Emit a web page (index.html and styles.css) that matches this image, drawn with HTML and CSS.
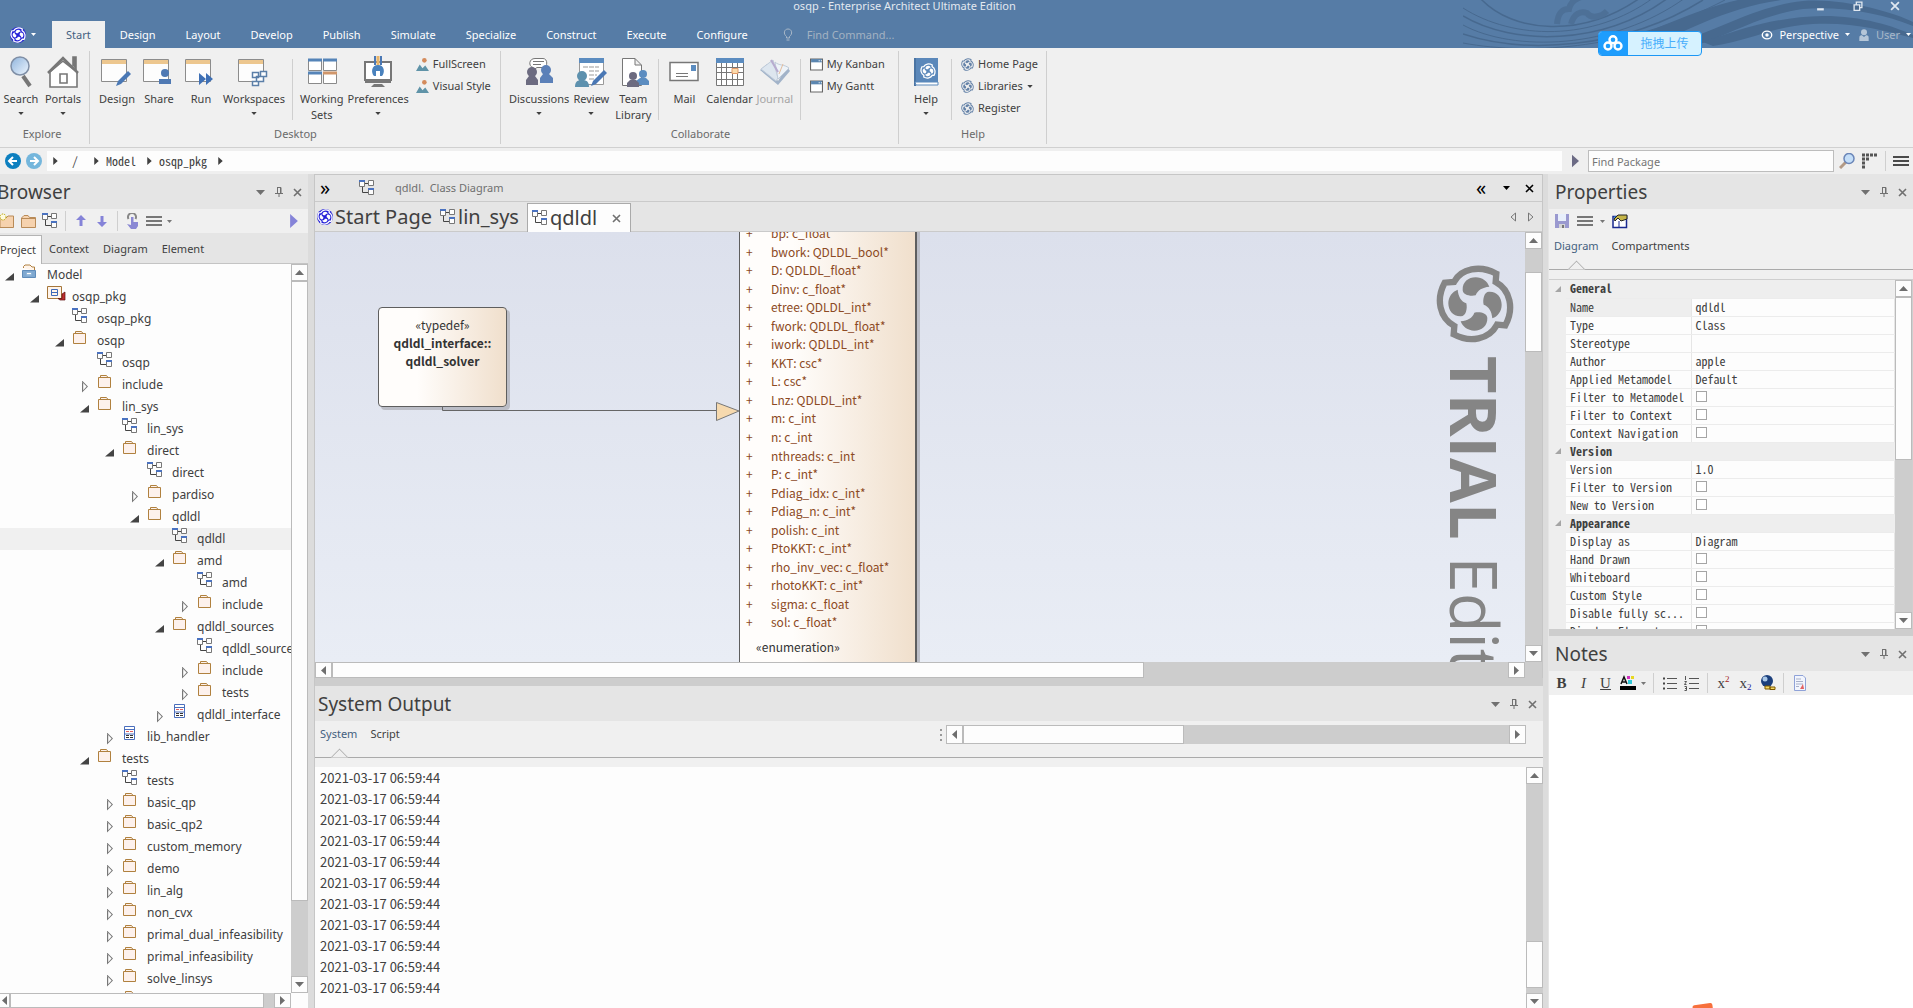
FILE: index.html
```html
<!DOCTYPE html>
<html lang="en">
<head>
    <meta charset="UTF-8">
    <meta name="viewport" content="width=device-width, initial-scale=1.0">
    <title>osqp - Enterprise Architect Ultimate Edition</title>
    <link rel="stylesheet" href="styles.css">
</head>
<body>
    <!-- shared icons -->
    <svg class="defs" aria-hidden="true">
        <defs>
            <linearGradient id="lens" x1="0" y1="0" x2="1" y2="1"><stop offset="0" stop-color="#8fb4dc"/><stop offset="1" stop-color="#eef6ff"/></linearGradient>
            <g id="petal"><path d="M-37-42C-38-66-20-80 2-80C22-80 37-68 43-52C22-50 8-42 2-26C-15-22-37-28-37-42Z"/></g>
        </defs>
        <symbol id="knot" viewBox="-120 -120 240 240">
            <path d="M-63-66C-42-106 14-118 64-91L62-66C106-42 118 14 91 64L66 62C42 106-14 118-64 91L-62 66C-106 42-118-14-91-64Z" fill="none" stroke="currentColor" stroke-width="19"/>
            <g fill="currentColor"><use href="#petal"/><use href="#petal" transform="rotate(90)"/><use href="#petal" transform="rotate(180)"/><use href="#petal" transform="rotate(270)"/></g>
        </symbol>
        <symbol id="up" viewBox="0 0 9 5"><path d="M0 5L4.500 0L9 5Z" fill="currentColor"/></symbol>
        <symbol id="down" viewBox="0 0 9 5"><path d="M0 0H9L4.500 5Z" fill="currentColor"/></symbol>
        <symbol id="left" viewBox="0 0 5 9"><path d="M5 0V9L0 4.500Z" fill="currentColor"/></symbol>
        <symbol id="right" viewBox="0 0 5 9"><path d="M0 0V9L5 4.500Z" fill="currentColor"/></symbol>
        <symbol id="pin" viewBox="0 0 8 10"><path d="M2 .5H6V6M2.500 0V6M5.500 0V6M0 6.500H8M4 6V10" fill="none" stroke="currentColor" stroke-width="1"/></symbol>
        <symbol id="cross" viewBox="0 0 9 9"><path d="M1 1L8 8M8 1L1 8" stroke="currentColor" stroke-width="1.600"/></symbol>
        <symbol id="menu" viewBox="0 0 16 10"><path d="M0 1H16M0 5H16M0 9H16" stroke="currentColor" stroke-width="2"/></symbol>
        <symbol id="diagram" viewBox="0 0 16 16"><path d="M6 3.500H9.500M3.500 6.500V12.500H9.500" fill="none" stroke="#444"/><path d="M.5.5H5.500V6.500H.5ZM9.500.5H14.500V5.500H9.500ZM9.500 8.500H14.500V14.500H9.500Z" fill="#fdfdfd" stroke="#777"/><path d="M0 1H6M9 9H15" stroke="#4a72c0" stroke-width="2"/></symbol>
        <symbol id="folder" viewBox="0 0 16 16"><path d="M1.500 3.500H13.500V13.500H1.500ZM3.500 3.500V1.500H9.500L11 3.500" fill="#fdf1ec" stroke="#b0813f"/></symbol>
        <symbol id="model" viewBox="0 0 16 16"><path d="M1.500 4V2.500L3 1H8L10 3H12.500V7" fill="#fff4ea" stroke="#b08040"/><path d="M.5 6.500H13.500V13.500H.5Z" fill="#7fa8d0" stroke="#5f8cba"/><path d="M4.500 8.500H9.500V11.500H4.500Z" fill="#9fc0e0"/><path d="M5 9.500H9" stroke="#fff"/></symbol>
        <symbol id="package" viewBox="0 0 20 16"><path d="M.5.5H14.500V12.500H.5Z" fill="#fff4ea" stroke="#a5763a"/><path d="M4.500 3.500H10.500V9.500H4.500ZM4.500 6.500H10.500" fill="none" stroke="#3f6ab8"/><path d="M11 12.500H15V8L18 6V14H13Z" fill="#c03030" stroke="#5a0d0d" stroke-width=".7"/></symbol>
        <symbol id="class" viewBox="0 0 16 16"><path d="M2.500.5H12.500V13.500H2.500Z" fill="#fff" stroke="#4a6ebc"/><path d="M3 3.500H12M3 8H12" stroke="#4a6ebc"/><path d="M4 5.500H7M8 5.500H11" stroke="#e06060"/><path d="M4 9.500H7M8 9.500H11M4 11.500H7M8 11.500H11" stroke="#333"/></symbol>
        <symbol id="win" viewBox="0 0 32 32"><path d="M.5 3.500H25.500V25.500H.5Z" fill="#fdfdfd" stroke="#8c8c8c"/><path d="M1 4H25V8H1Z" fill="#edc78f"/></symbol>
        <symbol id="picture" viewBox="0 0 14 14"><path d="M0 14L4 7L7 11L10 8L14 14Z" fill="#5f93a8"/><circle cx="9" cy="2.500" r="2.500" fill="#d48b5c"/></symbol>
        <symbol id="board" viewBox="0 0 12 12"><path d="M.5 1H11.500V11H.5Z" fill="#fff" stroke="#666"/><path d="M1 2.500H11" stroke="#5b86b0" stroke-width="3"/><path d="M8 2.500H9M10 2.500H11" stroke="#fff"/></symbol>
        <symbol id="person" viewBox="0 0 14 18"><circle cx="7" cy="5" r="4.500"/><path d="M0 18V13C0 10 2 9.500 4 9.500L7 12L10 9.500C12 9.500 14 10 14 13V18Z"/></symbol>
    </svg>

    <header class="titlebar">
        <svg class="waves" viewBox="0 0 450 48" fill="none" stroke="#47698f">
            <path d="M17-2C50 34 120 38 177-2M0 16C50 46 140 46 205-2M0 34C60 54 160 50 240 0" stroke-width="1.500"/>
            <path d="M0 8C50 40 130 42 190-2M0 25C50 52 150 50 222-2M0 43C70 56 170 48 262 0"/>
            <path d="M140 48C190 32 230 10 275 0H318C260 8 220 34 180 48Z" fill="#47698f" stroke="none"/>
            <path d="M196 48C250 34 290 6 340 1C380-2 430 12 450 22V26C420 14 380 6 340 9C290 16 260 40 222 48Z" fill="#47698f" stroke="none"/>
            <path d="M240 42C290 24 320 17 360 16C400 16 430 26 450 35V38C420 30 390 22 350 24C310 26 290 40 250 46Z" fill="#47698f" stroke="none"/>
            <path d="M94 24C95 13 99 9 106 9C108-1 120-5 126-3M108 24C111 13 118 11 124 13C128 19 138 17 144 11" stroke-width="6" stroke="#4d7097"/>
        </svg>
        <div class="caption">osqp - Enterprise Architect Ultimate Edition</div>
        <div class="winbtns">
            <button aria-label="Minimize"><svg viewBox="0 0 9 9"><path d="M1 7.500H7" stroke="#dfe7f0" stroke-width="2"/></svg></button>
            <button aria-label="Restore"><svg viewBox="0 0 9 9"><path d="M3 3V1H8V6H6M1 3.500H6V8.500H1Z" fill="none" stroke="#dfe7f0" stroke-width="1.200"/></svg></button>
            <button aria-label="Close"><svg viewBox="0 0 9 9"><use href="#cross"/></svg></button>
        </div>
        <nav class="tabs">
            <button class="app" aria-label="Application menu"><span class="ball"><svg><use href="#knot"/></svg></span><svg class="dn"><use href="#down"/></svg></button>
            <button class="on">Start</button>
            <button>Design</button>
            <button>Layout</button>
            <button>Develop</button>
            <button>Publish</button>
            <button>Simulate</button>
            <button>Specialize</button>
            <button>Construct</button>
            <button>Execute</button>
            <button>Configure</button>
            <label class="findcmd"><svg viewBox="0 0 10 14"><path d="M3.500 10V8.500C0 6 1 1 5 1S10 6 6.500 8.500V10ZM3.500 12H6.500" fill="none" stroke="#a9b8c8"/></svg><input type="text" placeholder="Find Command..."></label>
            <span class="grow"></span>
            <button class="who"><svg class="eye" viewBox="0 0 14 12"><ellipse cx="7" cy="6" rx="5.500" ry="4.500" fill="none" stroke="#fff" stroke-width="1.600"/><circle cx="7" cy="6" r="2" fill="#fff"/></svg>Perspective<svg class="dn"><use href="#down"/></svg></button>
            <button class="who dim"><svg class="eye" fill="#b5c6d8"><use href="#person"/></svg>User<svg class="dn"><use href="#down"/></svg></button>
        </nav>
    </header>

    <button class="upload"><span class="cloud"><svg viewBox="0 0 20 16" fill="none" stroke="#fff" stroke-width="2.400"><circle cx="5" cy="11" r="3.500"/><circle cx="15" cy="11" r="3.500"/><circle cx="10" cy="4.800" r="3.500"/></svg></span><span class="txt">拖拽上传</span></button>

    <div class="ribbon">
        <section class="group explore">
            <div class="tools">
                <button class="tool"><svg viewBox="0 0 32 32"><path d="M18 20L25 30" stroke="#777" stroke-width="4"/><circle cx="15" cy="10" r="9" fill="url(#lens)" stroke="#7f8fa6" stroke-width="1.500"/></svg>Search<svg class="dn"><use href="#down"/></svg></button>
                <button class="tool"><svg viewBox="0 0 32 32" fill="#fff" stroke="#777" stroke-width="1.600"><path d="M26 10V1H29V14" fill="#777"/><path d="M3 16V31H30V16L16 5Z"/><path d="M1 17L16 2L31 17" fill="none" stroke-width="2.500"/><path d="M13 18H20V27H13Z"/></svg>Portals<svg class="dn"><use href="#down"/></svg></button>
            </div>
            <h2>Explore</h2>
        </section>
        <section class="group desktop">
            <div class="tools">
                <button class="tool"><svg viewBox="0 0 32 32"><use href="#win"/><path d="M15 30L17 25L27 15L30 18L20 28Z" fill="#4a78b5"/></svg>Design</button>
                <button class="tool"><svg viewBox="0 0 32 32"><use href="#win"/><g fill="#4f79b3"><circle cx="22" cy="17" r="4"/><path d="M16 28V23H28V28Z"/></g></svg>Share</button>
                <button class="tool"><svg viewBox="0 0 32 32"><use href="#win"/><path d="M14 17L21 23L14 29ZM21 17L28 23L21 29Z" fill="#3f70b5"/></svg>Run</button>
                <button class="tool"><svg viewBox="0 0 32 32"><use href="#win"/><path d="M14.500 16.500H20.500V21.500H14.500ZM22.500 15.500H28.500V20.500H22.500ZM18.500 20.500H25.500V25.500H18.500ZM14.500 25.500H20.500V29.500H14.500Z" fill="#fff" stroke="#5b7fa8" stroke-width="1.500"/></svg>Workspaces<svg class="dn"><use href="#down"/></svg></button>
                <i class="sep"></i>
                <button class="tool"><svg viewBox="0 0 32 32"><path d="M2.500 3.500H15.500V14.500H2.500ZM17.500 3.500H30.500V14.500H17.500ZM2.500 16.500H15.500V27.500H2.500ZM17.500 16.500H30.500V27.500H17.500Z" fill="#fff" stroke="#8a8a8a"/><path d="M2 4H16M17 4H31M2 17H16" stroke="#5584b8" stroke-width="3"/><path d="M17 17H31" stroke="#d0966a" stroke-width="3"/></svg>Working<br>Sets</button>
                <button class="tool"><svg viewBox="0 0 32 32"><path d="M3 6H29V24H3Z" fill="#fff" stroke="#777" stroke-width="2"/><path d="M3 24H29V27H3Z" fill="#777"/><path d="M9 31L12 28H20L23 31Z" fill="#777"/><path d="M13 0V9M19 0V9" stroke="#4a78b5" stroke-width="2"/><path d="M16 0V9" stroke="#e8b56a" stroke-width="3"/><path d="M16 9C9 9 9 17 12 20H14V15H18V20H20C23 17 23 9 16 9Z" fill="#4a82bd"/></svg>Preferences<svg class="dn"><use href="#down"/></svg></button>
                <div class="small">
                    <button><svg><use href="#picture"/></svg>FullScreen</button>
                    <button><svg><use href="#picture"/></svg>Visual Style</button>
                </div>
            </div>
            <h2>Desktop</h2>
        </section>
        <section class="group collab">
            <div class="tools">
                <button class="tool"><svg viewBox="0 0 32 32"><path d="M12 2.500H20C25 2.500 25 11.500 20 11.500H14L10 14V11.500C5 10 6 2.500 12 2.500Z" fill="#fff" stroke="#777"/><path d="M10 5.500H21M10 8.500H18" stroke="#777"/><g fill="#6c6b80"><circle cx="9" cy="16" r="5"/><path d="M3 29V24L6 20H12L15 24V29Z"/></g><g fill="#5b80b8"><circle cx="23" cy="14" r="5"/><path d="M17 27V22L20 18H26L30 22V27Z"/></g></svg>Discussions<svg class="dn"><use href="#down"/></svg></button>
                <button class="tool"><svg viewBox="0 0 32 32"><path d="M4.500 4.500H28.500V28.500H4.500Z" fill="#fff" stroke="#999"/><path d="M4 2H29V7H4Z" fill="#5b8cc0"/><path d="M8 11H24M14 15H24M14 19H22M14 23H20" stroke="#999" stroke-dasharray="5 1"/><circle cx="7" cy="20" r="5" fill="#5d91ae"/><path d="M0 31C0 25 3 24 7 24S14 25 14 31Z" fill="#5d91ae"/><path d="M16 30L18 25L29 14L32 17L21 28Z" fill="#4a78b5"/></svg>Review<svg class="dn"><use href="#down"/></svg></button>
                <button class="tool"><svg viewBox="0 0 32 32"><path d="M5.500 2.500H18L24.500 9V29.500H5.500ZM18 2.500V9H24" fill="#fff" stroke="#777"/><g fill="#5b8cc0"><circle cx="26" cy="18" r="4"/><path d="M19 29V25L23 22H29L32 25V29Z"/></g><g fill="#6c6b80"><circle cx="16" cy="20" r="4"/><path d="M10 31V27L13 24H19L22 27V31Z"/></g></svg>Team<br>Library</button>
                <i class="sep"></i>
                <button class="tool"><svg viewBox="0 0 32 32"><path d="M2 6.500H30V24.500H2Z" fill="#fff" stroke="#777" stroke-width="1.500"/><path d="M23 9H28V15H23Z" fill="#5b8cc0"/><path d="M8 17.500H20M8 20.500H20" stroke="#777"/></svg>Mail</button>
                <button class="tool"><svg viewBox="0 0 32 32"><path d="M2.500 2.500H29.500V29.500H2.500Z" fill="#fff"/><path d="M2.500 7V29.500H29.500V7M7.500 7V29M12.500 7V29M18.500 7V29M23.500 7V29M3 11.500H29M3 16.500H29M3 23.500H29" fill="none" stroke="#777"/><path d="M2 2H30V7H2Z" fill="#5b8cc0"/><path d="M18 12.500H24V17.500H18Z" fill="#fbdcae" stroke="#e49a68"/></svg>Calendar</button>
                <button class="tool off"><svg viewBox="0 0 32 32"><path d="M1 14L8 8L19 25L28 11L31 15L19 29Z" fill="#8fa5c0"/><path d="M2 13L14 4L19 22L17 25Z" fill="#d9e4ef" stroke="#b4c3d4"/><path d="M19 23L16 6C20 10 25 8 30 12Z" fill="#eef4fa" stroke="#b4c3d4"/><path d="M12 4L19 16" stroke="#a99ac8" stroke-width="2"/><path d="M24 8L20 18" stroke="#e0b088"/></svg>Journal</button>
                <i class="sep"></i>
                <div class="small">
                    <button><svg><use href="#board"/></svg>My Kanban</button>
                    <button><svg><use href="#board"/></svg>My Gantt</button>
                </div>
            </div>
            <h2>Collaborate</h2>
        </section>
        <section class="group help">
            <div class="tools">
                <button class="tool"><svg viewBox="0 0 32 32"><path d="M4 2H28V26H4Z" fill="#5b88ba"/><path d="M4 2H6V30H4Z" fill="#4a74a3"/><path d="M5 26H28V29H6Z" fill="#fff" stroke="#5b88ba"/><svg x="10" y="7" width="16" height="16" color="#fff"><use href="#knot"/></svg></svg>Help<svg class="dn"><use href="#down"/></svg></button>
                <i class="sep"></i>
                <div class="small knots">
                    <button><svg><use href="#knot"/></svg>Home Page</button>
                    <button><svg><use href="#knot"/></svg>Libraries<svg class="dn"><use href="#down"/></svg></button>
                    <button><svg><use href="#knot"/></svg>Register</button>
                </div>
            </div>
            <h2>Help</h2>
        </section>
    </div>

    <div class="pathbar">
        <button class="round" aria-label="Back"><svg viewBox="0 0 16 16"><circle cx="8" cy="8" r="8" fill="#0d7fbf"/><path d="M12 8H4M8 4L4 8L8 12" fill="none" stroke="#fff" stroke-width="2"/></svg></button>
        <button class="round" aria-label="Forward"><svg viewBox="0 0 16 16"><circle cx="8" cy="8" r="8" fill="#74b6dc"/><path d="M4 8H12M8 4L12 8L8 12" fill="none" stroke="#fff" stroke-width="2"/></svg></button>
        <div class="crumbs">
            <svg class="rt"><use href="#right"/></svg><a href="#" class="root">/</a><svg class="rt"><use href="#right"/></svg><a href="#">Model</a><svg class="rt"><use href="#right"/></svg><a href="#">osqp_pkg</a><svg class="rt"><use href="#right"/></svg>
        </div>
        <svg class="go"><use href="#right"/></svg>
        <input type="text" class="findpkg" placeholder="Find Package" aria-label="Find Package">
        <div class="pathtools">
            <svg viewBox="0 0 16 16"><path d="M1 15L7 9" stroke="#b39a86" stroke-width="3"/><circle cx="10" cy="5.500" r="5" fill="#c4def8" stroke="#6b86b8" stroke-width="1.500"/></svg>
            <svg viewBox="0 0 16 16"><path d="M0 2H15M0 6H7M0 10H3M0 14H3" stroke="#555" stroke-width="3" stroke-dasharray="3 1"/></svg>
            <i class="sep"></i>
            <svg><use href="#menu"/></svg>
        </div>
    </div>

    <main class="work">
        <aside class="browser panel">
            <div class="head"><h1>Browser</h1><span class="headbtns"><svg class="dn"><use href="#down"/></svg><svg class="pn"><use href="#pin"/></svg><svg class="cr"><use href="#cross"/></svg></span></div>
            <div class="bar">
                <svg viewBox="0 0 16 16"><path d="M0 5H6L8 3H13.500V14.500H0Z" fill="#f6d2ae" stroke="#b98b58"/><circle cx="3" cy="4" r="3" fill="#fffbe0" stroke="#b8a400" stroke-dasharray="1.500 1"/></svg>
                <svg viewBox="0 0 16 16"><path d="M.5 14.500V5L3 2.500H7L8.500 4.500H14.500V14.500ZM.5 5.500H14" fill="#f6d2ae" stroke="#b98b58"/></svg>
                <svg><use href="#diagram"/></svg>
                <i class="sep"></i>
                <svg viewBox="0 0 16 16"><path d="M8 2L13 7H9.500V13H6.500V7H3Z" fill="#8583d8"/></svg>
                <svg viewBox="0 0 16 16"><path d="M8 14L13 9H9.500V3H6.500V9H3Z" fill="#8583d8"/></svg>
                <i class="sep"></i>
                <svg viewBox="0 0 16 16"><path d="M3.500 6A4 4 0 1 1 10.500 6" fill="none" stroke="#888" stroke-width="2"/><path d="M6 4H8.500V9H13V13L11 16H6L2 11L6 12Z" fill="#8a88d4"/></svg>
                <svg class="ham"><use href="#menu"/></svg>
                <svg class="dn"><use href="#down"/></svg>
                <svg class="play"><use href="#right"/></svg>
            </div>
            <div class="subtabs"><button class="on">Project</button><button>Context</button><button>Diagram</button><button>Element</button></div>
            <div class="treebox">
                <ul class="tree">
                    <li class="l0"><i class="open"></i><svg><use href="#model"/></svg>Model</li>
                    <li class="l1"><i class="open"></i><svg class="wide"><use href="#package"/></svg>osqp_pkg</li>
                    <li class="l2"><i></i><svg><use href="#diagram"/></svg>osqp_pkg</li>
                    <li class="l2"><i class="open"></i><svg><use href="#folder"/></svg>osqp</li>
                    <li class="l3"><i></i><svg><use href="#diagram"/></svg>osqp</li>
                    <li class="l3"><i class="shut"></i><svg><use href="#folder"/></svg>include</li>
                    <li class="l3"><i class="open"></i><svg><use href="#folder"/></svg>lin_sys</li>
                    <li class="l4"><i></i><svg><use href="#diagram"/></svg>lin_sys</li>
                    <li class="l4"><i class="open"></i><svg><use href="#folder"/></svg>direct</li>
                    <li class="l5"><i></i><svg><use href="#diagram"/></svg>direct</li>
                    <li class="l5"><i class="shut"></i><svg><use href="#folder"/></svg>pardiso</li>
                    <li class="l5"><i class="open"></i><svg><use href="#folder"/></svg>qdldl</li>
                    <li class="l6 sel"><i></i><svg><use href="#diagram"/></svg>qdldl</li>
                    <li class="l6"><i class="open"></i><svg><use href="#folder"/></svg>amd</li>
                    <li class="l7"><i></i><svg><use href="#diagram"/></svg>amd</li>
                    <li class="l7"><i class="shut"></i><svg><use href="#folder"/></svg>include</li>
                    <li class="l6"><i class="open"></i><svg><use href="#folder"/></svg>qdldl_sources</li>
                    <li class="l7"><i></i><svg><use href="#diagram"/></svg>qdldl_sources</li>
                    <li class="l7"><i class="shut"></i><svg><use href="#folder"/></svg>include</li>
                    <li class="l7"><i class="shut"></i><svg><use href="#folder"/></svg>tests</li>
                    <li class="l6"><i class="shut"></i><svg><use href="#class"/></svg>qdldl_interface</li>
                    <li class="l4"><i class="shut"></i><svg><use href="#class"/></svg>lib_handler</li>
                    <li class="l3"><i class="open"></i><svg><use href="#folder"/></svg>tests</li>
                    <li class="l4"><i></i><svg><use href="#diagram"/></svg>tests</li>
                    <li class="l4"><i class="shut"></i><svg><use href="#folder"/></svg>basic_qp</li>
                    <li class="l4"><i class="shut"></i><svg><use href="#folder"/></svg>basic_qp2</li>
                    <li class="l4"><i class="shut"></i><svg><use href="#folder"/></svg>custom_memory</li>
                    <li class="l4"><i class="shut"></i><svg><use href="#folder"/></svg>demo</li>
                    <li class="l4"><i class="shut"></i><svg><use href="#folder"/></svg>lin_alg</li>
                    <li class="l4"><i class="shut"></i><svg><use href="#folder"/></svg>non_cvx</li>
                    <li class="l4"><i class="shut"></i><svg><use href="#folder"/></svg>primal_dual_infeasibility</li>
                    <li class="l4"><i class="shut"></i><svg><use href="#folder"/></svg>primal_infeasibility</li>
                    <li class="l4"><i class="shut"></i><svg><use href="#folder"/></svg>solve_linsys</li>
                    <li class="l4"><i></i><svg><use href="#folder"/></svg></li>
                </ul>
                <div class="sb v tree-v"><b><svg><use href="#up"/></svg></b><span class="thumb"></span><span class="track"></span><b><svg><use href="#down"/></svg></b></div>
                <div class="sb h tree-h"><b><svg><use href="#left"/></svg></b><span class="thumb"></span><span class="track"></span><b><svg><use href="#right"/></svg></b></div>
            </div>
        </aside>

        <div class="center">
            <section class="diagram">
                <div class="dhead"><span class="chev">»</span><svg class="dico"><use href="#diagram"/></svg><span class="name">qdldl.&nbsp; Class Diagram</span><span class="headbtns dark"><span class="chev">«</span><svg class="dn"><use href="#down"/></svg><svg class="cr"><use href="#cross"/></svg></span></div>
                <div class="doctabs">
                    <button><span class="ball"><svg><use href="#knot"/></svg></span>Start Page</button>
                    <button><svg class="dico"><use href="#diagram"/></svg>lin_sys</button>
                    <button class="on"><svg class="dico"><use href="#diagram"/></svg>qdldl<svg class="cr"><use href="#cross"/></svg></button>
                    <span class="nav"><svg viewBox="0 0 6 10"><path d="M5.500 1V9L1 5Z" fill="none" stroke="#777"/></svg><svg viewBox="0 0 6 10"><path d="M.5 1V9L5 5Z" fill="none" stroke="#777"/></svg></span>
                </div>
                <div class="viewport">
                    <div class="canvas">
                        <div class="node typedef">«typedef»<br><strong>qdldl_interface::<br>qdldl_solver</strong></div>
                        <div class="node klass">
                            <ul>
                                <li>bp: c_float*</li>
                                <li>bwork: QDLDL_bool*</li>
                                <li>D: QDLDL_float*</li>
                                <li>Dinv: c_float*</li>
                                <li>etree: QDLDL_int*</li>
                                <li>fwork: QDLDL_float*</li>
                                <li>iwork: QDLDL_int*</li>
                                <li>KKT: csc*</li>
                                <li>L: csc*</li>
                                <li>Lnz: QDLDL_int*</li>
                                <li>m: c_int</li>
                                <li>n: c_int</li>
                                <li>nthreads: c_int</li>
                                <li>P: c_int*</li>
                                <li>Pdiag_idx: c_int*</li>
                                <li>Pdiag_n: c_int*</li>
                                <li>polish: c_int</li>
                                <li>PtoKKT: c_int*</li>
                                <li>rho_inv_vec: c_float*</li>
                                <li>rhotoKKT: c_int*</li>
                                <li>sigma: c_float</li>
                                <li>sol: c_float*</li>
                            </ul>
                            <p>«enumeration»</p>
                        </div>
                        <svg class="link" viewBox="0 0 300 20"><path d="M.5 4V8.500H274" fill="none" stroke="#666"/><path d="M274.500.5V18.500L297 9Z" fill="#f6d9ae" stroke="#777"/></svg>
                        <div class="mark"><svg><use href="#knot"/></svg><span><b>TRIAL</b> Edition</span></div>
                    </div>
                    <div class="sb v dia-v"><b><svg><use href="#up"/></svg></b><span class="track"></span><span class="thumb"></span><span class="track rest"></span><b><svg><use href="#down"/></svg></b></div>
                    <div class="sb h dia-h"><b><svg><use href="#left"/></svg></b><span class="thumb"></span><span class="track"></span><b><svg><use href="#right"/></svg></b></div>
                </div>
            </section>
            <section class="output panel">
                <div class="head"><h1>System Output</h1><span class="headbtns"><svg class="dn"><use href="#down"/></svg><svg class="pn"><use href="#pin"/></svg><svg class="cr"><use href="#cross"/></svg></span></div>
                <div class="links">
                    <a href="#" class="on">System</a><a href="#">Script</a>
                    <i class="grip"></i>
                    <div class="sb h out-h"><b><svg><use href="#left"/></svg></b><span class="thumb"></span><span class="track"></span><b><svg><use href="#right"/></svg></b></div>
                </div>
                <div class="log">
                    <ol>
                        <li>2021-03-17 06:59:44</li>
                        <li>2021-03-17 06:59:44</li>
                        <li>2021-03-17 06:59:44</li>
                        <li>2021-03-17 06:59:44</li>
                        <li>2021-03-17 06:59:44</li>
                        <li>2021-03-17 06:59:44</li>
                        <li>2021-03-17 06:59:44</li>
                        <li>2021-03-17 06:59:44</li>
                        <li>2021-03-17 06:59:44</li>
                        <li>2021-03-17 06:59:44</li>
                        <li>2021-03-17 06:59:44</li>
                    </ol>
                    <div class="sb v out-v"><b><svg><use href="#up"/></svg></b><span class="track"></span><span class="thumb"></span><span class="track rest"></span><b><svg><use href="#down"/></svg></b></div>
                </div>
            </section>
        </div>

        <aside class="side">
            <section class="props panel">
                <div class="head"><h1>Properties</h1><span class="headbtns"><svg class="dn"><use href="#down"/></svg><svg class="pn"><use href="#pin"/></svg><svg class="cr"><use href="#cross"/></svg></span></div>
                <div class="bar">
                    <svg viewBox="0 0 16 16"><path d="M1 1H15V15H1Z" fill="#9a99cf"/><path d="M4 1H12V8H4Z" fill="#e8effb"/><path d="M5 11H11V15H5Z" fill="#d5d5d5"/><path d="M8 12H10V15H8Z" fill="#777"/></svg>
                    <svg class="ham"><use href="#menu"/></svg>
                    <svg class="dn"><use href="#down"/></svg>
                    <svg viewBox="0 0 16 16"><path d="M1 3.500H14.500V14.500H1Z" fill="#fff" stroke="#1a2a90" stroke-width="1.500"/><path d="M2 4.500H9" stroke="#3c9be0" stroke-width="2"/><path d="M7 8V14" stroke="#1a2a90"/><path d="M2 6L6 2H15V6L9 8L6 5L3 8Z" fill="#c5b548" stroke="#222"/></svg>
                </div>
                <div class="links"><a href="#" class="on">Diagram</a><a href="#">Compartments</a></div>
                <div class="gridbox">
                    <div class="gridscroll">
                        <table>
                            <colgroup><col class="c1"><col class="c2"><col></colgroup>
                            <tbody>
                                <tr class="cat"><th><i></i></th><th colspan="2">General</th></tr>
                                <tr class="cur"><td></td><td>Name</td><td>qdldl</td></tr>
                                <tr><td></td><td>Type</td><td>Class</td></tr>
                                <tr><td></td><td>Stereotype</td><td></td></tr>
                                <tr><td></td><td>Author</td><td>apple</td></tr>
                                <tr><td></td><td>Applied Metamodel</td><td>Default</td></tr>
                                <tr><td></td><td><label for="p1">Filter to Metamodel</label></td><td><input type="checkbox" id="p1"></td></tr>
                                <tr><td></td><td><label for="p2">Filter to Context</label></td><td><input type="checkbox" id="p2"></td></tr>
                                <tr><td></td><td><label for="p3">Context Navigation</label></td><td><input type="checkbox" id="p3"></td></tr>
                                <tr class="cat"><th><i></i></th><th colspan="2">Version</th></tr>
                                <tr><td></td><td>Version</td><td>1.0</td></tr>
                                <tr><td></td><td><label for="p4">Filter to Version</label></td><td><input type="checkbox" id="p4"></td></tr>
                                <tr><td></td><td><label for="p5">New to Version</label></td><td><input type="checkbox" id="p5"></td></tr>
                                <tr class="cat"><th><i></i></th><th colspan="2">Appearance</th></tr>
                                <tr><td></td><td>Display as</td><td>Diagram</td></tr>
                                <tr><td></td><td><label for="p6">Hand Drawn</label></td><td><input type="checkbox" id="p6"></td></tr>
                                <tr><td></td><td><label for="p7">Whiteboard</label></td><td><input type="checkbox" id="p7"></td></tr>
                                <tr><td></td><td><label for="p8">Custom Style</label></td><td><input type="checkbox" id="p8"></td></tr>
                                <tr><td></td><td><label for="p9">Disable fully sc...</label></td><td><input type="checkbox" id="p9"></td></tr>
                                <tr><td></td><td><label for="p10">Display Element...</label></td><td><input type="checkbox" id="p10"></td></tr>
                            </tbody>
                        </table>
                    </div>
                    <div class="sb v prop-v"><b><svg><use href="#up"/></svg></b><span class="thumb"></span><span class="track"></span><b><svg><use href="#down"/></svg></b></div>
                </div>
            </section>
            <section class="notes panel">
                <div class="head"><h1>Notes</h1><span class="headbtns"><svg class="dn"><use href="#down"/></svg><svg class="pn"><use href="#pin"/></svg><svg class="cr"><use href="#cross"/></svg></span></div>
                <div class="bar fmt">
                    <button><b>B</b></button>
                    <button><i>I</i></button>
                    <button><u>U</u></button>
                    <button aria-label="Text colour"><svg viewBox="0 0 16 16"><path d="M1 9L4 2L7 9M2.500 7H6" fill="none" stroke="#111" stroke-width="1.500"/><path d="M7 1H10V4H7Z" fill="#d030c0"/><path d="M11 1H14V4H11Z" fill="#e8d820"/><path d="M8 5H12V9H8Z" fill="#30c8d8"/><path d="M0 11H16V15H0Z"/></svg></button>
                    <svg class="dn"><use href="#down"/></svg>
                    <i class="sep"></i>
                    <button aria-label="Bullets"><svg viewBox="0 0 16 16"><path d="M5 3.500H15M5 8.500H15M5 13.500H15" stroke="#555"/><path d="M1 3.500H3M1 8.500H3M1 13.500H3" stroke="#444" stroke-width="2"/></svg></button>
                    <button aria-label="Numbering"><svg viewBox="0 0 16 16"><path d="M5 3.500H15M5 8.500H15M5 13.500H15" stroke="#555"/><path d="M1.500 1V5M.5 6.500H2.500L.5 9.500H2.500M.5 11.500H2.500V15.500H.5M1 13.500H2.500" fill="none" stroke="#444" stroke-width=".9"/></svg></button>
                    <i class="sep"></i>
                    <button>x<sup>2</sup></button>
                    <button>x<sub>2</sub></button>
                    <button aria-label="Hyperlink"><svg viewBox="0 0 16 16"><circle cx="7" cy="6" r="6" fill="#1b3f7c"/><circle cx="5" cy="4" r="2.500" fill="#a9c8e8"/><path d="M5 11H10V14H5ZM10 12H15V14.500H10Z" fill="#f5d860" stroke="#7a5600"/></svg></button>
                    <i class="sep"></i>
                    <button aria-label="Document"><svg viewBox="0 0 16 16"><path d="M2.500.5H11L13.500 3V15.500H2.500Z" fill="#f2f5fd" stroke="#8fa2d8"/><path d="M4 4H9M4 6.500H11M4 9H11M4 11.500H7" stroke="#a8b0c8"/><path d="M8 14L11 9L12 14Z" fill="#e46060"/></svg></button>
                </div>
                <div class="paper" contenteditable="true"></div>
            </section>
        </aside>
    </main>
    <i class="sticker"></i>
</body>
</html>
```
FILE: styles.css
```css
* {
    box-sizing: border-box;
}

body {
    margin: 0;
    height: 100vh;
    display: flex;
    flex-direction: column;
    overflow: hidden;
    background: #f0f0f0;
    color: #404040;
    font: 11px/16px "Noto Sans", "Noto Sans CJK SC", sans-serif;
}

button {
    display: flex;
    align-items: center;
    padding: 0;
    border: none;
    background: none;
    color: inherit;
    font: inherit;
}

h1, h2, ul, ol, p {
    margin: 0;
    padding: 0;
    font-weight: normal;
    list-style: none;
}

a {
    color: inherit;
    text-decoration: none;
}

svg {
    display: block;
    flex: none;
}

.defs {
    position: absolute;
    width: 0;
    height: 0;
}

svg.dn { width: 9px; height: 5px; }
svg.pn { width: 8px; height: 10px; }
svg.cr { width: 9px; height: 9px; }

.sep {
    width: 1px;
    background: #cfcfcf;
}

.grow {
    flex: 1;
}

/* title bar */
.titlebar {
    position: relative;
    flex: none;
    height: 48px;
    background: #567ca6;
    color: #fff;
}

.waves {
    position: absolute;
    right: 0;
    top: 0;
    width: 450px;
    height: 48px;
}

.caption {
    position: relative;
    height: 21px;
    line-height: 12px;
    text-align: center;
    padding-right: 104px;
    color: #e3e9f0;
}

.winbtns {
    position: absolute;
    right: 13px;
    top: 1px;
    display: flex;
    gap: 27px;
    color: #dfe7f0;
}

.winbtns svg {
    width: 10px;
    height: 10px;
}

.tabs {
    position: relative;
    display: flex;
    height: 27px;
}

.tabs button {
    padding: 0 15px;
}

.tabs .app {
    width: 52px;
    padding: 0 0 0 10px;
    gap: 5px;
}

.tabs svg.dn {
    width: 5px;
    height: 3px;
}

.tabs .on {
    padding: 0 14px;
    background: #f0f0f0;
    color: #44607f;
}

.ball {
    width: 16px;
    height: 16px;
    border-radius: 8px;
    background: #2420d8;
    color: #fff;
}

.ball svg {
    width: 16px;
    height: 16px;
}

.findcmd {
    display: flex;
    align-items: center;
    margin-left: 20px;
    gap: 14px;
}

.findcmd svg {
    width: 10px;
    height: 14px;
}

.findcmd input {
    width: 120px;
    padding: 0;
    border: none;
    background: none;
    font: inherit;
}

.findcmd input::placeholder {
    color: #a3b2c2;
}

.tabs .who {
    padding: 0 8px 0 0;
    gap: 6px;
}

.tabs .dim {
    padding-right: 2px;
    color: #a9b8c8;
}

.eye {
    width: 12px;
    height: 12px;
}

.who svg.dn {
    color: #fff;
}

.upload {
    position: absolute;
    right: 211px;
    top: 31px;
    width: 104px;
    height: 25px;
    align-items: stretch;
    border: 1px solid #1c97f5;
    border-radius: 4px;
    background: #d6f2ff;
    overflow: hidden;
    color: #47aefc;
    font: 12px/22px "Noto Sans CJK SC", sans-serif;
}

.cloud {
    width: 29px;
    padding: 3px 4px;
    background: #1e9dfd;
}

.cloud svg {
    width: 20px;
    height: 16px;
}

.txt {
    flex: 1;
}

/* ribbon */
.ribbon {
    flex: none;
    display: flex;
    height: 100px;
    border-bottom: 1px solid #d0d0d0;
    padding: 3px 0;
}

.group {
    display: flex;
    flex-direction: column;
    justify-content: space-between;
    border-right: 1px solid #cfcfcf;
}

.explore { width: 90px; }
.desktop { width: 411px; padding-left: 6px; }
.collab { width: 398px; padding-left: 7px; }
.help { width: 148px; padding-left: 6px; }

.group h2 {
    font-size: 11px;
    text-align: center;
    color: #6a6a6a;
    margin-bottom: 2px;
    padding-right: 5px;
}

.tools {
    display: flex;
    padding-top: 5px;
}

.tools .sep {
    height: 61px;
    margin: 3px 4px 0;
}

.tool {
    flex-direction: column;
    min-width: 42px;
    padding: 0 1px;
}

.desktop .sep {
    margin: 3px 5px 0 6px;
}

.desktop .sep ~ .tool {
    padding: 0 2px;
}

.tool > svg:first-child {
    width: 32px;
    height: 32px;
    margin-bottom: 3px;
}

.tool svg.dn, .small svg.dn {
    width: 6px;
    height: 3px;
    margin-top: 5px;
}

.small svg.dn {
    margin: 0;
}

.off {
    color: #a5a5a5;
}

.off svg {
    opacity: .8;
}

.small {
    display: flex;
    flex-direction: column;
    gap: 6px;
    padding-left: 5px;
}

.small button {
    gap: 4px;
}

.small svg {
    width: 13px;
    height: 13px;
}

.knots {
    color: #404040;
}

.knots button > svg:first-child {
    color: #6482a8;
}

/* path bar */
.pathbar {
    flex: none;
    display: flex;
    align-items: center;
    height: 26px;
    padding-left: 5px;
    gap: 5px;
    background: #efefef;
}

.round svg {
    width: 16px;
    height: 16px;
}

.crumbs {
    flex: 1;
    display: flex;
    align-items: center;
    height: 20px;
    padding-left: 6px;
    background: #fdfdfd;
    font: 12px/20px "Noto Sans Mono CJK SC", monospace;
}

.crumbs a {
    margin: 0 11px 0 7px;
}

.crumbs .root {
    margin: 0 16px 0 14px;
}

.crumbs svg {
    width: 5px;
    height: 8px;
}

svg.go {
    width: 7px;
    height: 14px;
    margin: 0 4px 0 5px;
    color: #6b6a84;
}

.findpkg {
    width: 246px;
    height: 22px;
    padding: 0 3px;
    border: 1px solid #bdbdbd;
    background: #fdfdfd;
    font: inherit;
}

.findpkg::placeholder {
    color: #757575;
}

.pathtools {
    display: flex;
    align-items: center;
    gap: 7px;
    padding-right: 4px;
    color: #4a4a4a;
}

.pathtools svg {
    width: 16px;
    height: 16px;
}

.pathtools .sep {
    height: 20px;
}

/* docked panels */
.work {
    flex: 1;
    display: flex;
    min-height: 0;
    background: #dcdcdc;
}

.panel {
    display: flex;
    flex-direction: column;
    min-height: 0;
    overflow: hidden;
}

.head {
    flex: none;
    display: flex;
    align-items: center;
    justify-content: space-between;
    height: 35px;
    padding: 1px 6px 0;
    background: #e5e5e5;
}

.head h1 {
    font-size: 19px;
    line-height: 34px;
}

.headbtns {
    display: flex;
    align-items: center;
    gap: 10px;
    color: #707070;
}

.bar {
    flex: none;
    display: flex;
    align-items: center;
    height: 24px;
    background: #f0f0f0;
}

.bar svg {
    width: 16px;
    height: 16px;
}

.bar svg.dn {
    width: 5px;
    height: 3px;
    color: #777;
}

.bar .sep {
    height: 20px;
}

.ham {
    color: #777;
}

/* browser */
.browser {
    width: 308px;
    margin-right: 6px;
}

.browser h1 {
    margin-left: -9px;
}

.browser .bar {
    gap: 5px;
    padding-right: 10px;
}

.browser .bar .sep {
    margin: 0 2px;
}

.browser svg.play {
    width: 8px;
    height: 14px;
    margin-left: auto;
    color: #8583d8;
}

.subtabs {
    flex: none;
    display: flex;
    height: 31px;
    padding-top: 2px;
    background: #e5e5e5;
    border-bottom: 1px solid #c4c4c4;
}

.subtabs button {
    padding: 0 7px;
}

.subtabs .on {
    height: 29px;
    padding: 0 5px 0 0;
    border: 1px solid #b4b4b4;
    border-width: 1px 1px 0 0;
    background: #fdfdfd;
}

.treebox {
    flex: 1;
    display: grid;
    grid-template-columns: 1fr 17px;
    grid-template-rows: 1fr 15px;
    min-height: 0;
    background: #fdfdfd;
}

.tree {
    min-height: 0;
    overflow: hidden;
    font-size: 12px;
    line-height: 22px;
}

.tree li {
    display: flex;
    align-items: center;
    height: 22px;
    white-space: nowrap;
}

.tree svg {
    width: 16px;
    height: 16px;
    margin: 0 9px 6px 7px;
}

.tree svg.wide {
    width: 20px;
    margin-right: 5px;
}

.tree .sel {
    background: #f0f0f0;
}

.tree i {
    flex: none;
    width: 10px;
    height: 9px;
    margin-top: 3px;
}

.tree .open {
    background: #444;
    clip-path: polygon(90% 10%, 90% 95%, 0 95%);
}

.tree .shut {
    height: 12px;
    background: #777;
    clip-path: polygon(20% 0, 80% 50%, 20% 100%, 20% 14%, 32% 18%, 32% 82%, 66% 50%, 20% 10%);
}

.l0 { padding-left: 5px; }
.l1 { padding-left: 30px; }
.l2 { padding-left: 55px; }
.l3 { padding-left: 80px; }
.l4 { padding-left: 105px; }
.l5 { padding-left: 130px; }
.l6 { padding-left: 155px; }
.l7 { padding-left: 180px; }

/* scroll bars */
.sb {
    display: flex;
    background: #cdcdcd;
    color: #6e6e6e;
}

.sb.v {
    flex-direction: column;
    width: 17px;
}

.sb b {
    flex: none;
    display: flex;
    align-items: center;
    justify-content: center;
    width: 17px;
    height: 17px;
    border: 1px solid #bbb;
    background: #fdfdfd;
}

.sb.h b {
    height: 100%;
}

.sb.v svg { width: 9px; height: 5px; }
.sb.h svg { width: 5px; height: 9px; }

.thumb {
    border: 1px solid #bbb;
    background: #fdfdfd;
}

.tree-v .thumb { flex: 620; }
.tree-v .track { flex: 75; }
.tree-h .thumb { flex: 253; }
.tree-h .track { flex: 10; }
.tree-h b:first-child { width: 10px; border-left: none; }
.dia-v .track { flex: 23; }
.dia-v .thumb { flex: 78; }
.dia-v .rest { flex: 295; }
.dia-h .thumb { flex: 812; }
.dia-h .track { flex: 365; }
.out-h .thumb { flex: 220; }
.out-h .track { flex: 326; }
.out-v .track { flex: 159; }
.out-v .thumb { flex: 45; }
.out-v .rest { flex: 5; }
.prop-v .thumb { flex: 162; }
.prop-v .track { flex: 153; }

/* diagram */
.center {
    flex: 1;
    display: grid;
    grid-template-rows: 504fr 330fr;
    min-width: 0;
    border-left: 1px solid #c6c6c6;
}

.diagram {
    display: flex;
    flex-direction: column;
    min-height: 0;
    border: 1px solid #c6c6c6;
    border-width: 1px 1px 0 0;
    background: #e5e5e5;
}

.dhead {
    flex: none;
    display: flex;
    align-items: center;
    height: 27px;
    padding: 0 8px 0 5px;
    border-bottom: 1px solid #cacaca;
    color: #707070;
}

.dico {
    width: 16px;
    height: 16px;
}

.dhead > .dico {
    margin: 0 20px 0 27px;
}

.chev {
    width: 12px;
    color: #000;
    font-size: 20px;
    line-height: 20px;
}

.dhead .headbtns {
    margin-left: auto;
    gap: 15px;
    color: #000;
}

.dark svg.dn {
    width: 7px;
    height: 4px;
}

.doctabs {
    flex: none;
    display: flex;
    height: 30px;
    padding: 1px 8px 0 2px;
    border-bottom: 1px solid #cacaca;
    font-size: 20px;
    line-height: 28px;
}

.doctabs button {
    gap: 2px;
    margin-right: 8px;
}

.doctabs .on {
    height: 29px;
    margin: 0;
    padding: 0 9px 0 4px;
    border: 1px solid #aaa;
    border-bottom: none;
    background: #fdfdfd;
}

.on > svg.cr {
    margin-left: 13px;
    color: #707070;
}

.nav {
    display: flex;
    align-items: center;
    gap: 12px;
    margin-left: auto;
}

.nav svg {
    width: 6px;
    height: 10px;
}

.viewport {
    flex: 1;
    display: grid;
    grid-template-columns: 1fr 17px;
    grid-template-rows: 1fr 16px;
    min-height: 0;
    background: #cdcdcd;
}

.canvas {
    position: relative;
    overflow: hidden;
    background: linear-gradient(#dce0ec, #e9edf5);
    font: 12px/18px "Noto Sans CJK SC", sans-serif;
    color: #333;
}

.node {
    position: absolute;
    border: 1px solid #5e5e5e;
    background: linear-gradient(90deg, #fffdfb 30%, #f0dfcc);
    box-shadow: 3px 3px 0 #bbbdc6;
}

.typedef {
    left: 63px;
    top: 75px;
    width: 129px;
    height: 100px;
    padding-top: 8px;
    border-radius: 4px;
    text-align: center;
}

.klass {
    left: 424px;
    top: -9px;
    width: 178px;
    height: 460px;
    border-right-width: 2px;
}

.klass ul {
    display: flex;
    flex-direction: column;
    height: 408px;
}

.klass li {
    flex: 1;
    padding-left: 6px;
    color: #8c4a24;
}

.klass li::before {
    content: "+";
    display: inline-block;
    width: 25px;
}

.klass p {
    padding: 6px 0 0 16px;
}

.link {
    position: absolute;
    left: 127px;
    top: 170px;
    width: 300px;
    height: 20px;
}

.mark {
    position: absolute;
    right: 10px;
    top: 32px;
    width: 80px;
    color: #858585;
    font: 65px/80px "Open Sans", sans-serif;
}

.mark svg {
    width: 80px;
    height: 80px;
}

.mark span {
    display: block;
    margin-top: 12px;
    writing-mode: vertical-rl;
    white-space: nowrap;
}

/* system output */
.output {
    padding-top: 8px;
    background: #cdcdcd;
}

.output .head {
    padding-left: 3px;
}

.links {
    position: relative;
    flex: none;
    display: flex;
    gap: 13px;
    height: 46px;
    padding: 5px 17px 0 5px;
    background: linear-gradient(#f0f0f0, #f0f0f0) 0 37px / 100% 9px no-repeat, linear-gradient(#aaa, #aaa) 0 36px / 100% 1px no-repeat, #f0f0f0;
}

.links a {
    position: relative;
    line-height: 16px;
    color: #404040;
}

.links .on {
    color: #44607f;
}

.links .on::after {
    content: "";
    position: absolute;
    left: calc(50% - 6px);
    top: 25px;
    width: 12px;
    height: 12px;
    border: 1px solid #aaa;
    border-width: 1px 0 0 1px;
    background: #f0f0f0;
    transform: rotate(45deg);
    clip-path: polygon(0 0, 100% 0, 0 100%);
}

.grip {
    width: 2px;
    height: 12px;
    margin: 3px -9px 0 auto;
    background: repeating-linear-gradient(#999 0 2px, transparent 2px 5px);
}

.out-h {
    flex: 0 0 580px;
    height: 19px;
    margin-top: -1px;
}

.log {
    flex: 1;
    display: flex;
    justify-content: space-between;
    min-height: 0;
    background: #fdfdfd;
}

.log ol {
    padding-left: 5px;
    overflow: hidden;
    font: 13px/21px "Noto Sans CJK SC", sans-serif;
}

.out-v {
    margin-bottom: -2px;
}

/* right column */
.side {
    width: 365px;
    margin-left: 5px;
    display: grid;
    grid-template-rows: 455fr 379fr;
    border-left: 1px solid #e5e5e5;
}

.props {
    background: #f0f0f0;
}

.props .bar {
    gap: 7px;
    padding-left: 5px;
}

.gridbox {
    flex: 1;
    display: flex;
    min-height: 0;
    border: 1px solid #cfcfcf;
    border-width: 1px 1px 0 0;
}

.gridscroll {
    flex: 1;
    overflow: hidden;
}

table {
    width: 100%;
    table-layout: fixed;
    border-collapse: collapse;
    font: 12px/15px "Noto Sans Mono CJK SC", monospace;
}

.c1 {
    width: 17px;
}

.c2 {
    width: 125px;
}

td, th {
    padding: 0 4px 2px;
    height: 18px;
    border-bottom: 1px solid #ececec;
    background: #fdfdfd;
    text-align: left;
    overflow: hidden;
    white-space: nowrap;
}

td + td {
    border-right: 1px solid #e6e6e6;
}

td:nth-child(2) {
    padding-right: 0;
}

.cat th, td:first-child, .cur td:nth-child(2) {
    background: #eeeeee;
}

tr > :first-child {
    padding: 0 0 0 6px;
    border: none;
}

.cat i {
    display: block;
    width: 6px;
    height: 6px;
    background: #a5a5a5;
    clip-path: polygon(100% 0, 100% 100%, 0 100%);
}

table input {
    appearance: none;
    display: block;
    width: 11px;
    height: 11px;
    margin: 0;
    border: 1px solid #a5a5a5;
    background: #fff;
}

/* notes */
.notes {
    border-top: 7px solid #cdcdcd;
}

.fmt {
    padding-left: 4px;
    gap: 5px;
    font: 15px/20px "Liberation Serif", serif;
}

.fmt .sep {
    margin: 0 2px;
}

.fmt button {
    width: 17px;
    justify-content: center;
}

.fmt sup {
    align-self: flex-start;
    color: #a02020;
    font-size: 9px;
    line-height: 12px;
}

.fmt sub {
    align-self: flex-end;
    color: #2020a0;
    font-size: 9px;
    line-height: 12px;
}

.paper {
    flex: 1;
    background: #fff;
}

.sticker {
    position: absolute;
    right: 200px;
    bottom: -8px;
    width: 20px;
    height: 12px;
    border-radius: 2px;
    background: #f7703c;
    transform: rotate(-8deg);
}
```
